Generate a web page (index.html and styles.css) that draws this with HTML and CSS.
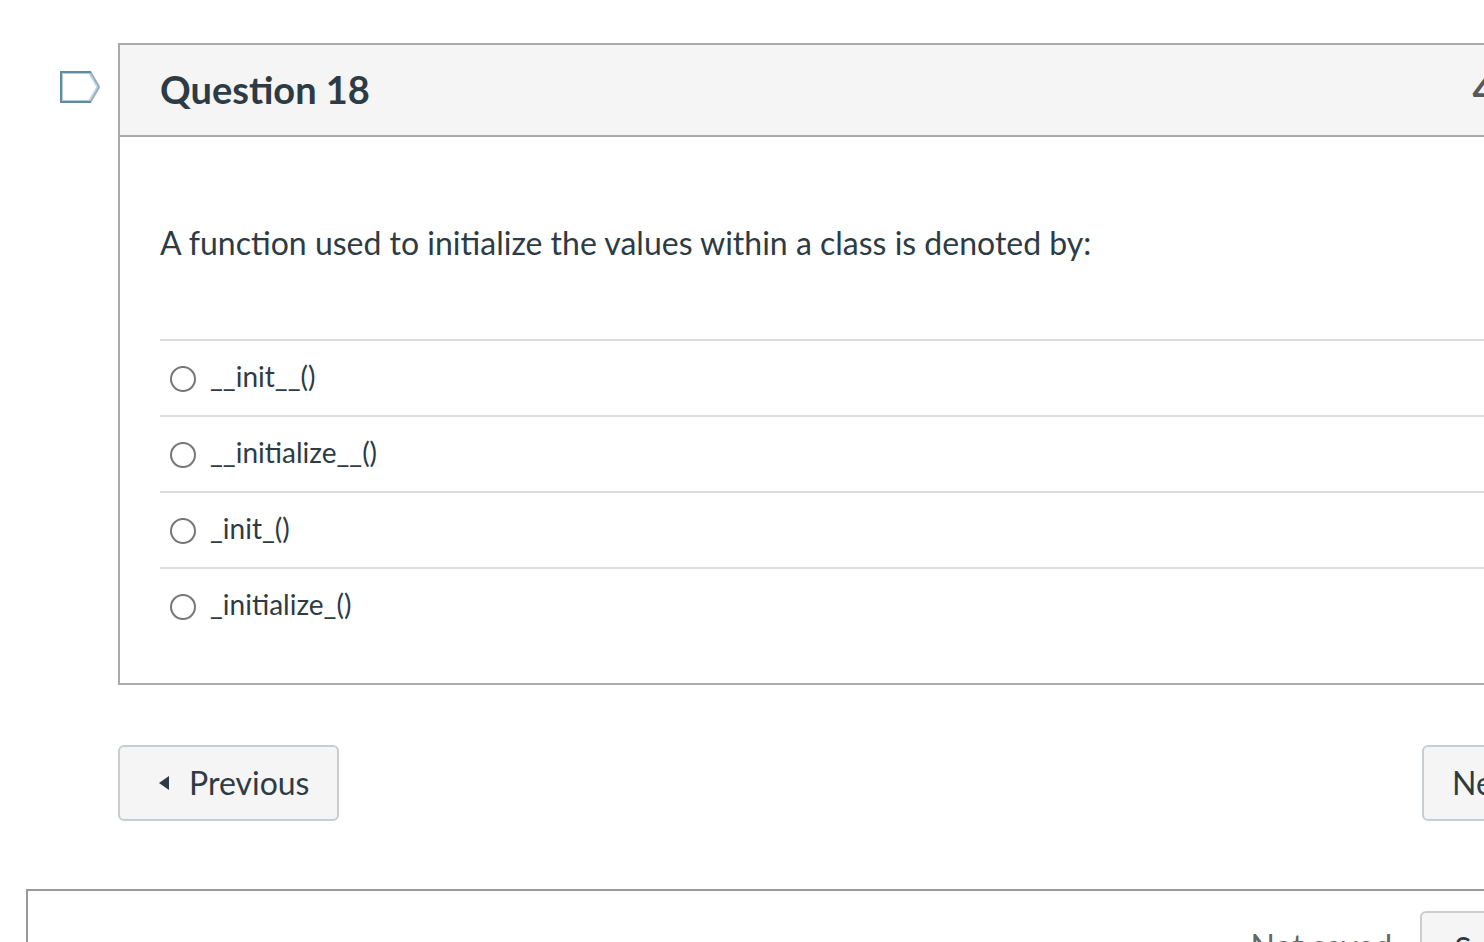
FILE: index.html
```html
<!DOCTYPE html>
<html lang="en">
<head>
    <meta charset="UTF-8">
    <meta name="viewport" content="width=device-width, initial-scale=1.0">
    <title>Question 18</title>
    <link rel="stylesheet" href="styles.css">
</head>
<body>
    <form class="quiz">
        <div class="question-row">
            <button type="button" class="flag" aria-label="Flag question">
                <svg width="40" height="32" viewBox="0 0 40 32" fill="none">
                    <path d="M29.500 1l9 15-9 15" stroke="#c3d2db" stroke-width="3.500"/>
                    <path d="M30.500 1l8.500 15-8.500 15" stroke="#8cabbd" stroke-width="1.500"/>
                    <path d="M31 1H1V31H31" stroke="#5f8ba5" stroke-width="2"/>
                    <path d="M30 2.500H2.500v27H30" stroke="#b3cad7" stroke-width="1"/>
                </svg>
            </button>
            <section class="question">
                <header class="question-header">
                    <h1 class="question-name">Question 18</h1>
                    <span class="points">4 pts</span>
                </header>
                <div class="question-body">
                    <p class="question-text" id="question-text">A function used to initialize the values within a class is denoted by:</p>
                    <div class="answers" role="radiogroup" aria-labelledby="question-text">
                        <label class="answer"><input type="radio" name="answer"><span>__init__()</span></label>
                        <label class="answer"><input type="radio" name="answer"><span>__initialize__()</span></label>
                        <label class="answer"><input type="radio" name="answer"><span>_init_()</span></label>
                        <label class="answer"><input type="radio" name="answer"><span>_initialize_()</span></label>
                    </div>
                </div>
            </section>
        </div>

        <div class="nav-buttons">
            <button type="button" class="button">
                <svg class="arrow-left" width="10" height="14" viewBox="0 0 10 14"><path d="M10 0v14L0 7z" fill="currentColor"/></svg>
                Previous
            </button>
            <button type="button" class="button">
                Next
                <svg class="arrow-right" width="10" height="14" viewBox="0 0 10 14"><path d="M0 0v14l10-7z" fill="currentColor"/></svg>
            </button>
        </div>

        <div class="submit-bar">
            <span class="save-status">Not saved</span>
            <button type="submit" class="button submit-button">Submit Quiz</button>
        </div>
    </form>
</body>
</html>
```

FILE: styles.css
```css
* {
    box-sizing: border-box;
}
html {
    overflow: hidden;
}
body {
    height: 100vh;
    margin: 0;
    overflow: hidden;
    background-color: #fff;
    color: #2d3b45;
    font-family: Lato, "Open Sans", sans-serif;
    font-size: 32px;
    line-height: 48px;
}
/* the quiz column runs on past the right edge of the window */
.quiz {
    margin-right: -198px;
    padding: 43px 0 0 26px;
}
.question-row {
    display: flex;
    align-items: flex-start;
    margin-right: 92px;
}
.flag {
    display: flex;
    flex: none;
    margin: 28px 18px 0 34px;
    padding: 0;
    border: 0;
    background: none;
    cursor: pointer;
}
.question {
    flex: 1;
    border: 2px solid #aaa;
}
.question-header {
    display: flex;
    justify-content: space-between;
    align-items: center;
    height: 92px;
    padding: 0 32px 2px 40px;
    border-bottom: 2px solid #aaa;
    background-color: #f5f5f5;
}
.question-name {
    margin: 0;
    font-size: 38px;
    font-weight: bold;
}
.points {
    color: #595959;
    font-size: 38px;
    font-weight: bold;
}
.question-body {
    padding: 82px 40px 40px;
}
.question-text {
    margin: 0 0 72px;
}
.answer {
    display: flex;
    align-items: center;
    gap: 14px;
    height: 76px;
    padding-left: 10px;
    border-top: 2px solid #ddd;
    font-size: 28px;
    line-height: 40px;
    cursor: pointer;
}
.answer span {
    padding-bottom: 4px;
}
.answer input {
    appearance: none;
    width: 26px;
    height: 26px;
    margin: 2px 0 0;
    border: 2px solid #767676;
    border-radius: 50%;
    background-color: #fff;
}
.answer input:checked {
    border-width: 8px;
}
.nav-buttons {
    display: flex;
    justify-content: space-between;
    margin: 60px 92px 68px;
}
.button {
    display: flex;
    align-items: center;
    height: 76px;
    padding: 0 28px;
    border: 2px solid #c7cdd1;
    border-radius: 6px;
    background-color: #f5f5f5;
    color: #2d3b45;
    font: inherit;
    white-space: nowrap;
    cursor: pointer;
}
.button:hover {
    background-color: #e6e6e6;
}
.arrow-left {
    margin: 0 20px 0 11px;
}
.arrow-right {
    margin: 0 10px 0 20px;
}
.submit-bar {
    display: flex;
    justify-content: flex-end;
    align-items: center;
    gap: 28px;
    padding: 20px;
    border: 2px solid #999;
}
.submit-button {
    padding: 0 32px;
}
.save-status {
    padding-bottom: 6px;
    color: #666;
}
```
